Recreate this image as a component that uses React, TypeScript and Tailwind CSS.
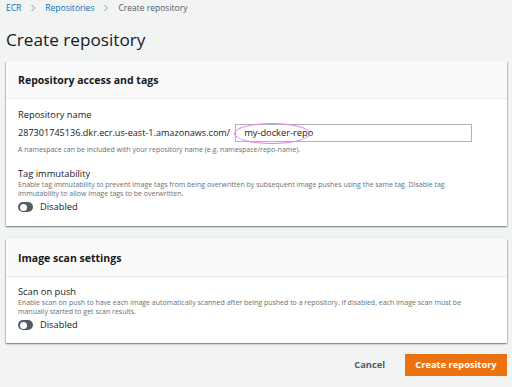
import React from 'react';

function Chevron() {
  return (
    <svg width="8" height="8" viewBox="0 0 8 8" className="mx-[8px]">
      <path d="M2.5 1 L5.5 4 L2.5 7" fill="none" stroke="#879596" strokeWidth="1" />
    </svg>
  );
}

function Toggle() {
  return (
    <div className="flex items-center h-[12px]">
      <div className="w-[15px] h-[10px] rounded-full bg-[#545b64] relative">
        <div className="absolute left-[1.5px] top-[1.5px] w-[7px] h-[7px] rounded-full bg-white" />
      </div>
      <span className="ml-[7px] text-[9.3px] text-[#16191f]">Disabled</span>
    </div>
  );
}

function Card({ title, children }: { title: string; children: React.ReactNode }) {
  return (
    <div className="bg-white shadow-[0_1px_1.5px_0_rgba(0,28,36,0.3),1px_1px_1px_0_rgba(0,28,36,0.15),-1px_1px_1px_0_rgba(0,28,36,0.15)]">
      <div className="h-[38px] bg-[#fafafa] border-b border-[#eaeded] flex items-center px-[12px] pt-[2px]">
        <h2 className="text-[10.5px] font-bold text-[#16191f]">{title}</h2>
      </div>
      {children}
    </div>
  );
}

export default function App() {
  return (
    <div className="w-[512px] h-[387px] bg-[#f2f3f3] pl-[6px] pr-[5px] overflow-hidden" style={{ fontFamily: '"Open Sans", "Liberation Sans", sans-serif' }}>
      {/* breadcrumbs */}
      <div className="flex items-center h-[16px] text-[8.5px]">
        <span className="text-[#0073bb]">ECR</span>
        <Chevron />
        <span className="text-[#0073bb]">Repositories</span>
        <Chevron />
        <span className="text-[#545b64]">Create repository</span>
      </div>

      <h1 className="mt-[13px] text-[17.2px] leading-[22px] text-[#16191f]">Create repository</h1>

      <div className="mt-[10px]">
        <Card title="Repository access and tags">
          <div className="px-[12px] pt-[10px] pb-[13px]">
            <div className="text-[9.3px] leading-[12px] text-[#16191f]">Repository name</div>
            <div className="mt-[3px] flex items-center h-[18px]">
              <span className="text-[9.1px] text-[#16191f]">287301745136.dkr.ecr.us-east-1.amazonaws.com/</span>
              <div className="relative ml-[5px] w-[237px] h-[18px] border border-[#aab7b8] bg-white flex items-center pl-[8px] text-[9.3px] text-[#16191f]">
                my-docker-repo
                <div className="absolute left-[-2px] top-[-2px] w-[76px] h-[21px] rounded-[50%] border border-[#e87ee8]" />
              </div>
            </div>
            <div className="mt-[3px] text-[7px] leading-[10px] text-[#687078]">
              A namespace can be included with your repository name (e.g. namespace/repo-name).
            </div>
            <div className="mt-[13px] text-[9.3px] leading-[12px] text-[#16191f]">Tag immutability</div>
            <div className="text-[7px] leading-[9px] text-[#687078] pr-[20px]">
              Enable tag immutability to prevent image tags from being overwritten by subsequent image pushes using the same tag. Disable tag immutability to allow image tags to be overwritten.
            </div>
            <div className="mt-[3px]">
              <Toggle />
            </div>
          </div>
        </Card>
      </div>

      <div className="mt-[13px]">
        <Card title="Image scan settings">
          <div className="px-[12px] pt-[9px] pb-[12px]">
            <div className="text-[9.3px] leading-[12px] text-[#16191f]">Scan on push</div>
            <div className="text-[7px] leading-[9px] text-[#687078] pr-[20px]">
              Enable scan on push to have each image automatically scanned after being pushed to a repository. If disabled, each image scan must be manually started to get scan results.
            </div>
            <div className="mt-[3px]">
              <Toggle />
            </div>
          </div>
        </Card>
      </div>

      <div className="mt-[11px] flex items-center justify-end">
        <button className="text-[9.3px] font-bold text-[#545b64] mr-[20px]">Cancel</button>
        <button className="h-[22px] w-[102px] bg-[#ec7211] text-white text-[9.3px] font-bold">Create repository</button>
      </div>
    </div>
  );
}
